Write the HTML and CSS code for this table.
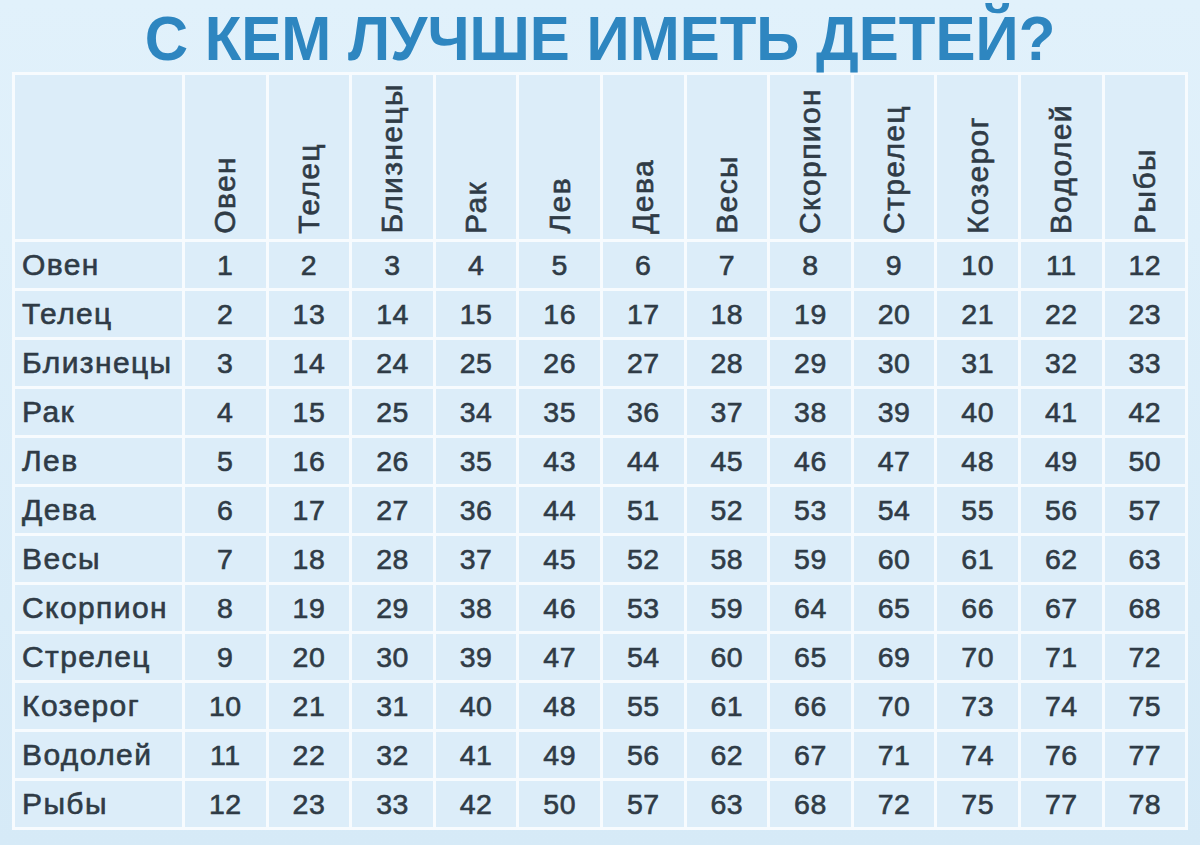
FILE: index.html
```html
<!DOCTYPE html>
<html lang="ru">
<head>
<meta charset="utf-8">
<title>С кем лучше иметь детей?</title>
<link rel="stylesheet" href="styles.css">
</head>
<body>
<div class="page">
  <h1 class="title">С КЕМ ЛУЧШЕ ИМЕТЬ ДЕТЕЙ?</h1>
  <div class="grid" id="grid">
    <div class="corner"></div>
    <div class="head"><span>Овен</span></div>
    <div class="head"><span>Телец</span></div>
    <div class="head"><span>Близнецы</span></div>
    <div class="head"><span>Рак</span></div>
    <div class="head"><span>Лев</span></div>
    <div class="head"><span>Дева</span></div>
    <div class="head"><span>Весы</span></div>
    <div class="head"><span>Скорпион</span></div>
    <div class="head"><span>Стрелец</span></div>
    <div class="head"><span>Козерог</span></div>
    <div class="head"><span>Водолей</span></div>
    <div class="head"><span>Рыбы</span></div>

    <div class="label">Овен</div><div class="num">1</div><div class="num">2</div><div class="num">3</div><div class="num">4</div><div class="num">5</div><div class="num">6</div><div class="num">7</div><div class="num">8</div><div class="num">9</div><div class="num">10</div><div class="num">11</div><div class="num">12</div>
    <div class="label">Телец</div><div class="num">2</div><div class="num">13</div><div class="num">14</div><div class="num">15</div><div class="num">16</div><div class="num">17</div><div class="num">18</div><div class="num">19</div><div class="num">20</div><div class="num">21</div><div class="num">22</div><div class="num">23</div>
    <div class="label">Близнецы</div><div class="num">3</div><div class="num">14</div><div class="num">24</div><div class="num">25</div><div class="num">26</div><div class="num">27</div><div class="num">28</div><div class="num">29</div><div class="num">30</div><div class="num">31</div><div class="num">32</div><div class="num">33</div>
    <div class="label">Рак</div><div class="num">4</div><div class="num">15</div><div class="num">25</div><div class="num">34</div><div class="num">35</div><div class="num">36</div><div class="num">37</div><div class="num">38</div><div class="num">39</div><div class="num">40</div><div class="num">41</div><div class="num">42</div>
    <div class="label">Лев</div><div class="num">5</div><div class="num">16</div><div class="num">26</div><div class="num">35</div><div class="num">43</div><div class="num">44</div><div class="num">45</div><div class="num">46</div><div class="num">47</div><div class="num">48</div><div class="num">49</div><div class="num">50</div>
    <div class="label">Дева</div><div class="num">6</div><div class="num">17</div><div class="num">27</div><div class="num">36</div><div class="num">44</div><div class="num">51</div><div class="num">52</div><div class="num">53</div><div class="num">54</div><div class="num">55</div><div class="num">56</div><div class="num">57</div>
    <div class="label">Весы</div><div class="num">7</div><div class="num">18</div><div class="num">28</div><div class="num">37</div><div class="num">45</div><div class="num">52</div><div class="num">58</div><div class="num">59</div><div class="num">60</div><div class="num">61</div><div class="num">62</div><div class="num">63</div>
    <div class="label">Скорпион</div><div class="num">8</div><div class="num">19</div><div class="num">29</div><div class="num">38</div><div class="num">46</div><div class="num">53</div><div class="num">59</div><div class="num">64</div><div class="num">65</div><div class="num">66</div><div class="num">67</div><div class="num">68</div>
    <div class="label">Стрелец</div><div class="num">9</div><div class="num">20</div><div class="num">30</div><div class="num">39</div><div class="num">47</div><div class="num">54</div><div class="num">60</div><div class="num">65</div><div class="num">69</div><div class="num">70</div><div class="num">71</div><div class="num">72</div>
    <div class="label">Козерог</div><div class="num">10</div><div class="num">21</div><div class="num">31</div><div class="num">40</div><div class="num">48</div><div class="num">55</div><div class="num">61</div><div class="num">66</div><div class="num">70</div><div class="num">73</div><div class="num">74</div><div class="num">75</div>
    <div class="label">Водолей</div><div class="num">11</div><div class="num">22</div><div class="num">32</div><div class="num">41</div><div class="num">49</div><div class="num">56</div><div class="num">62</div><div class="num">67</div><div class="num">71</div><div class="num">74</div><div class="num">76</div><div class="num">77</div>
    <div class="label">Рыбы</div><div class="num">12</div><div class="num">23</div><div class="num">33</div><div class="num">42</div><div class="num">50</div><div class="num">57</div><div class="num">63</div><div class="num">68</div><div class="num">72</div><div class="num">75</div><div class="num">77</div><div class="num">78</div>
  </div>
</div>
</body>
</html>
```

FILE: styles.css
```css
html, body {
  margin: 0;
  padding: 0;
}
body {
  width: 1200px;
  height: 845px;
  overflow: hidden;
  background: linear-gradient(180deg, #e1f1fb 0%, #d6eaf7 100%);
  font-family: "Liberation Sans", Arial, sans-serif;
  color: #2f3b46;
}
.page {
  display: flex;
  flex-direction: column;
  align-items: center;
}
.title {
  margin: 0;
  height: 72px;
  line-height: 78px;
  font-size: 60px;
  font-weight: 700;
  color: #2e86c0;
  white-space: nowrap;
  transform: scaleY(1.06);
}
.grid {
  display: grid;
  grid-template-columns: 167px repeat(12, 80.6px);
  grid-template-rows: 164px repeat(12, 46px);
  gap: 3px;
  padding: 3px;
  background: #f7fbfe;
  width: 1170px;
}
.corner, .head, .label, .num {
  background: #dcedf9;
}
.head {
  display: flex;
  align-items: flex-end;
  justify-content: center;
  padding-bottom: 5px;
}
.head span {
  writing-mode: vertical-rl;
  transform: rotate(180deg);
  font-size: 30px;
  line-height: 32px;
  letter-spacing: 1.4px;
  -webkit-text-stroke: 0.6px #2f3b46;
}
.label {
  display: flex;
  align-items: center;
  padding-left: 7px;
  font-size: 30px;
  letter-spacing: 1.4px;
  -webkit-text-stroke: 0.6px #2f3b46;
}
.num {
  display: flex;
  align-items: center;
  justify-content: center;
  font-size: 28.5px;
  letter-spacing: 0.5px;
  -webkit-text-stroke: 0.6px #2f3b46;
}
```
